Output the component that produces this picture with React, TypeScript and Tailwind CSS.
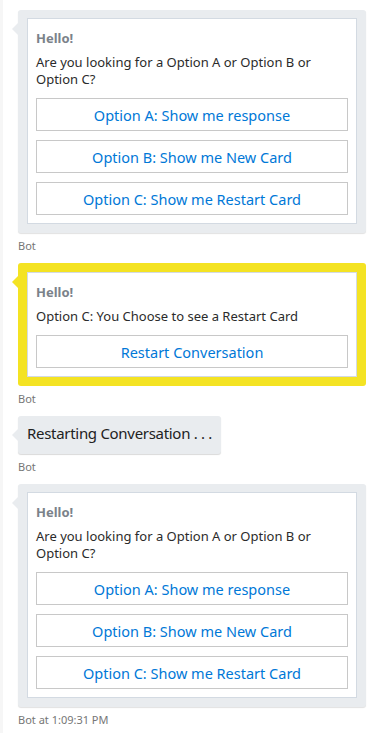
import React from "react";

const font = { fontFamily: '"Noto Sans", "Open Sans", Arial, sans-serif' };

function Tail({ color }: { color: string }) {
  return (
    <span
      className={`absolute left-[-6px] top-[13px] h-0 w-0 border-y-[6px] border-r-[6px] border-y-transparent ${color}`}
    />
  );
}

function ActionButton({ label }: { label: string }) {
  return (
    <button className="h-[33px] w-full border border-[#c8c8c8] bg-white text-[14.5px] leading-[20px] text-[#0078d7]">
      {label}
    </button>
  );
}

function Card({ text, buttons }: { text: string; buttons: string[] }) {
  return (
    <div className="border border-[#d3dae2] bg-white px-[8px] pb-[8px] pt-[11px]">
      <div className="text-[13px] font-bold leading-[16px] text-[#7b828a]">Hello!</div>
      <div className="mt-[8px] text-[13px] leading-[17px] text-[#2b2b2b]">{text}</div>
      <div className="mt-[10px] flex flex-col gap-[9px]">
        {buttons.map((b) => (
          <ActionButton key={b} label={b} />
        ))}
      </div>
    </div>
  );
}

function Label({ text }: { text: string }) {
  return <div className="mt-[5px] text-[11px] leading-[16px] text-[#767676]">{text}</div>;
}

const opts = ["Option A: Show me response", "Option B: Show me New Card", "Option C: Show me Restart Card"];

export default function App() {
  return (
    <div className="min-h-[733px] w-[390px] border-l-[3px] border-[#f6f6f6] bg-white" style={font}>
      <div className="flex flex-col pl-[15px] pr-[24px] pt-[10px]">
        <div>
          <div className="relative rounded-[3px] bg-[#e9ecef] px-[9px] pb-[9px] pt-[8px] shadow-[0_1px_1px_rgba(0,0,0,0.12)]">
            <Tail color="border-r-[#e9ecef]" />
            <Card text="Are you looking for a Option A or Option B or Option C?" buttons={opts} />
          </div>
          <Label text="Bot" />
        </div>

        <div className="mt-[9px]">
          <div className="relative rounded-[3px] bg-[#f4e323] px-[9px] pb-[9px] pt-[9px]">
            <Tail color="border-r-[#f4e323]" />
            <Card text="Option C: You Choose to see a Restart Card" buttons={["Restart Conversation"]} />
          </div>
          <Label text="Bot" />
        </div>

        <div className="mt-[9px]">
          <div className="relative inline-flex h-[38px] items-center rounded-[3px] bg-[#e9ecef] px-[9px] pb-[3px] text-[15px] tracking-[-0.3px] text-[#222] shadow-[0_1px_1px_rgba(0,0,0,0.15)]">
            <Tail color="border-r-[#e9ecef]" />
            Restarting Conversation . . .
          </div>
          <Label text="Bot" />
        </div>

        <div className="mt-[9px]">
          <div className="relative rounded-[3px] bg-[#e9ecef] px-[9px] pb-[9px] pt-[8px] shadow-[0_1px_1px_rgba(0,0,0,0.12)]">
            <Tail color="border-r-[#e9ecef]" />
            <Card text="Are you looking for a Option A or Option B or Option C?" buttons={opts} />
          </div>
          <Label text="Bot at 1:09:31 PM" />
        </div>
      </div>
    </div>
  );
}
